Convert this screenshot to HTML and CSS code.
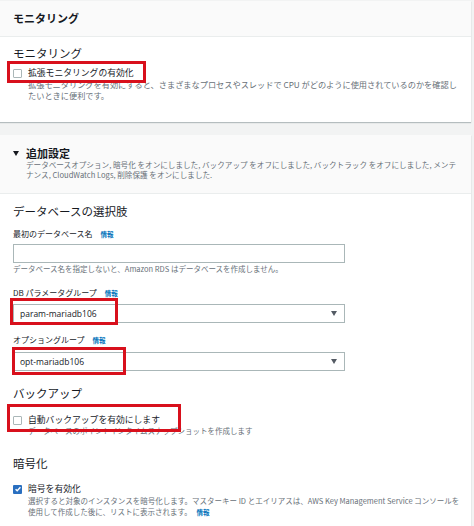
FILE: index.html
```html
<!DOCTYPE html>
<html lang="ja">
<head>
<meta charset="utf-8">
<title>RDS 設定</title>
<link rel="stylesheet" href="styles.css">
</head>
<body>
<div class="page">
  <section class="card">
    <div class="card-header plain">
      <h2 class="card-title">モニタリング</h2>
    </div>
    <div class="card-body mon-body">
      <h3 class="sub">モニタリング</h3>
      <div class="check-row"><span class="box"></span><span class="check-label">拡張モニタリングの有効化</span></div>
      <p class="desc indent mon-desc">拡張モニタリングを有効にすると、さまざまなプロセスやスレッドで CPU がどのように使用されているのかを確認したいときに便利です。</p>
    </div>
  </section>

  <section class="card card2">
    <div class="card-header expand">
      <h2 class="card-title"><svg class="caret" width="6" height="5" viewBox="0 0 6 5"><path d="M0 0H6L3 5Z" fill="#16191f"/></svg>追加設定</h2>
      <p class="hdesc">データベースオプション, 暗号化 をオンにしました, バックアップ をオフにしました, バックトラック をオフにしました, メンテナンス, CloudWatch Logs, 削除保護 をオンにしました.</p>
    </div>
    <div class="card-body main-body">
      <h3 class="sub">データベースの選択肢</h3>

      <div class="label l-first">最初のデータベース名<a class="info">情報</a></div>
      <div class="input"></div>
      <p class="help">データベース名を指定しないと、Amazon RDS はデータベースを作成しません。</p>

      <div class="label l-param">DB パラメータグループ<a class="info">情報</a></div>
      <div class="select s-param"><span>param-mariadb106</span><svg width="6" height="5" viewBox="0 0 6 5"><path d="M0 0H6L3 5Z" fill="#545b64"/></svg></div>

      <div class="label l-opt">オプショングループ<a class="info">情報</a></div>
      <div class="select s-opt"><span>opt-mariadb106</span><svg width="6" height="5" viewBox="0 0 6 5"><path d="M0 0H6L3 5Z" fill="#545b64"/></svg></div>

      <h3 class="sub h-backup">バックアップ</h3>
      <div class="check-row r-backup"><span class="box"></span><span class="check-label">自動バックアップを有効にします</span></div>
      <p class="help indent tight">データベースのポイントインタイムスナップショットを作成します</p>

      <h3 class="sub h-enc">暗号化</h3>
      <div class="check-row r-enc"><span class="box checked"><svg width="8" height="8" viewBox="0 0 8 8"><path d="M1.6 4.2L3.2 5.8L6.4 2.2" fill="none" stroke="#fff" stroke-width="1.4"/></svg></span><span class="check-label">暗号を有効化</span></div>
      <p class="desc indent enc-desc">選択すると対象のインスタンスを暗号化します。マスターキー ID とエイリアスは、AWS Key Management Service コンソールを使用して作成した後に、リストに表示されます。 <a class="info">情報</a></p>
    </div>
  </section>

  <div class="mark m1"></div>
  <div class="mark m2"></div>
  <div class="mark m3"></div>
  <div class="mark m4"></div>
</div>
</body>
</html>
```
FILE: styles.css
```css
html, body {
  margin: 0;
  padding: 0;
  background: #f2f3f3;
}
body {
  font-family: "Noto Sans CJK JP", "Open Sans", sans-serif;
  color: #16191f;
}
.page {
  position: relative;
  padding: 1px 3px 0 0;
  height: 525px;
  overflow: hidden;
}
.card {
  background: #fff;
  box-shadow: 0 1px 1px rgba(0, 28, 36, 0.25);
}
.card2 {
  margin-top: 13px;
}
.card-header {
  background: #fafafa;
  border-bottom: 1px solid #eaeded;
  padding-left: 13px;
}
.card-header.plain {
  height: 35px;
  display: flex;
  align-items: center;
}
.card-title {
  margin: 0;
  font-size: 11px;
  line-height: 13px;
  font-weight: bold;
  display: flex;
  align-items: center;
}
.card-header.expand {
  padding-top: 12px;
  padding-bottom: 13px;
}
.caret {
  margin-right: 7px;
}
.hdesc {
  margin: 0;
  padding-left: 13px;
  padding-right: 12px;
  font-size: 7.6px;
  line-height: 10px;
  color: #687078;
}
.card-body {
  padding-left: 13px;
}
.mon-body {
  padding-top: 9px;
  padding-bottom: 21px;
}
.main-body {
  padding-top: 9px;
  padding-bottom: 20px;
}
.sub {
  margin: 0;
  font-size: 11.5px;
  line-height: 16px;
  font-weight: normal;
  color: #16191f;
}
.mon-body .sub {
  line-height: 14px;
}
.check-row {
  display: flex;
  align-items: center;
  height: 12px;
  margin-top: 7px;
}
.box {
  width: 7px;
  height: 7px;
  border: 1px solid #aab7b8;
  border-radius: 1px;
  background: #fff;
  margin-right: 6px;
  display: flex;
  align-items: center;
  justify-content: center;
}
.box.checked {
  width: 9px;
  height: 9px;
  border: none;
  background: #2a6fc0;
  margin-right: 6px;
}
.check-label {
  font-size: 8.8px;
  line-height: 12px;
}
.desc {
  margin: 0;
  font-size: 7.5px;
  line-height: 11px;
  color: #687078;
  padding-right: 10px;
}
.mon-desc {
  font-size: 8.2px;
  padding-right: 12px;
}
.indent {
  padding-left: 15px;
}
.label {
  font-size: 8px;
  line-height: 12px;
  display: flex;
  align-items: center;
}
.info {
  font-size: 6.5px;
  line-height: 10px;
  font-weight: bold;
  color: #0073bb;
  margin-left: 8px;
}
.desc .info {
  display: inline-block;
  margin-left: 3px;
  line-height: 9px;
}
.l-first { margin-top: 9px; }
.l-param { margin-top: 13px; }
.l-opt { margin-top: 11px; }
.input {
  margin-top: 4px;
  width: 330px;
  height: 17px;
  border: 1px solid #aab7b8;
  background: #fff;
}
.help {
  margin: 1px 0 0;
  font-size: 7.5px;
  line-height: 10px;
  color: #687078;
}
.help.tight {
  margin-top: 0;
  line-height: 9px;
}
.select {
  width: 330px;
  height: 17px;
  border: 1px solid #aab7b8;
  background: #fff;
  display: flex;
  align-items: center;
  justify-content: space-between;
  font-family: "Open Sans", "Noto Sans CJK JP", sans-serif;
  font-size: 8.5px;
  color: #16191f;
}
.select span {
  padding-left: 6px;
}
.select svg {
  margin-right: 7px;
}
.s-param { margin-top: 5px; }
.s-opt { margin-top: 6px; }
.h-backup { margin-top: 14px; }
.r-backup { margin-top: 13px; }
.h-enc { margin-top: 20px; }
.r-enc { margin-top: 12px; }
.mark {
  position: absolute;
  border: 3.5px solid #d8101c;
  box-sizing: border-box;
}
.m1 { left: 7px; top: 61px; width: 139px; height: 22px; }
.m2 { left: 10px; top: 298px; width: 108px; height: 27px; }
.m3 { left: 12px; top: 347px; width: 114px; height: 28px; }
.m4 { left: 7px; top: 404px; width: 174px; height: 28px; }
```
